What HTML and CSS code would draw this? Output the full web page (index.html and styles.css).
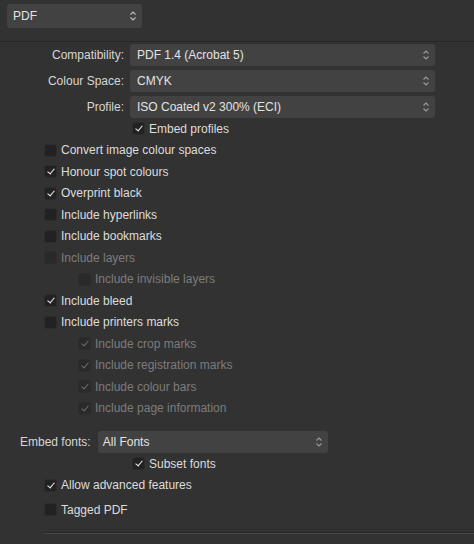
FILE: index.html
```html
<!DOCTYPE html>
<html lang="en">
<head>
    <meta charset="UTF-8">
    <title>PDF Export</title>
    <link rel="stylesheet" href="styles.css">
</head>
<body>
    <div class="topbar">
        <div class="popup popup-preset">
            <span>PDF</span>
            <svg class="chev" width="8" height="12" viewBox="0 0 8 12"><path d="M1.5 4.5 4 2l2.5 2.5M1.5 7.5 4 10l2.5-2.5" fill="none" stroke="#bdbdbd" stroke-width="1.1"/></svg>
        </div>
    </div>

    <div class="settings">
        <div class="field-grid">
            <label class="field-label">Compatibility:</label>
            <div class="popup">
                <span>PDF 1.4 (Acrobat 5)</span>
                <svg class="chev" width="8" height="12" viewBox="0 0 8 12"><path d="M1.5 4.5 4 2l2.5 2.5M1.5 7.5 4 10l2.5-2.5" fill="none" stroke="#9a9a9a" stroke-width="1.1"/></svg>
            </div>
            <label class="field-label">Colour Space:</label>
            <div class="popup">
                <span>CMYK</span>
                <svg class="chev" width="8" height="12" viewBox="0 0 8 12"><path d="M1.5 4.5 4 2l2.5 2.5M1.5 7.5 4 10l2.5-2.5" fill="none" stroke="#9a9a9a" stroke-width="1.1"/></svg>
            </div>
            <label class="field-label">Profile:</label>
            <div class="popup">
                <span>ISO Coated v2 300% (ECI)</span>
                <svg class="chev" width="8" height="12" viewBox="0 0 8 12"><path d="M1.5 4.5 4 2l2.5 2.5M1.5 7.5 4 10l2.5-2.5" fill="none" stroke="#9a9a9a" stroke-width="1.1"/></svg>
            </div>
        </div>

        <div class="check-row indent-field">
            <span class="box checked"></span>
            <span>Embed profiles</span>
        </div>

        <div class="check-list">
            <div class="check-row"><span class="box"></span><span>Convert image colour spaces</span></div>
            <div class="check-row"><span class="box checked"></span><span>Honour spot colours</span></div>
            <div class="check-row"><span class="box checked"></span><span>Overprint black</span></div>
            <div class="check-row"><span class="box"></span><span>Include hyperlinks</span></div>
            <div class="check-row"><span class="box"></span><span>Include bookmarks</span></div>
            <div class="check-row disabled"><span class="box"></span><span>Include layers</span></div>
            <div class="check-row disabled sub"><span class="box"></span><span>Include invisible layers</span></div>
            <div class="check-row"><span class="box checked"></span><span>Include bleed</span></div>
            <div class="check-row"><span class="box"></span><span>Include printers marks</span></div>
            <div class="check-row disabled sub"><span class="box checked"></span><span>Include crop marks</span></div>
            <div class="check-row disabled sub"><span class="box checked"></span><span>Include registration marks</span></div>
            <div class="check-row disabled sub"><span class="box checked"></span><span>Include colour bars</span></div>
            <div class="check-row disabled sub"><span class="box checked"></span><span>Include page information</span></div>
        </div>

        <div class="fonts-row">
            <label class="field-label">Embed fonts:</label>
            <div class="popup popup-fonts">
                <span>All Fonts</span>
                <svg class="chev" width="8" height="12" viewBox="0 0 8 12"><path d="M1.5 4.5 4 2l2.5 2.5M1.5 7.5 4 10l2.5-2.5" fill="none" stroke="#9a9a9a" stroke-width="1.1"/></svg>
            </div>
        </div>

        <div class="check-row indent-field"><span class="box checked"></span><span>Subset fonts</span></div>
        <div class="check-row"><span class="box checked"></span><span>Allow advanced features</span></div>
        <div class="check-row tagged"><span class="box"></span><span>Tagged PDF</span></div>

        <div class="divider"></div>
    </div>
</body>
</html>
```

FILE: styles.css
```css
body {
    margin: 0;
    background-color: #323232;
    font-family: "Liberation Sans", Arial, sans-serif;
    font-size: 12px;
    color: #dcdcdc;
    overflow: hidden;
}
.topbar {
    height: 42px;
    box-sizing: border-box;
    padding: 4px 0 0 7px;
    border-bottom: 1px solid #262626;
}
.popup {
    display: flex;
    align-items: center;
    justify-content: space-between;
    height: 22px;
    box-sizing: border-box;
    padding: 0 5px 0 7px;
    background-color: #424242;
    border-radius: 3px;
    color: #e2e2e2;
}
.popup-preset {
    width: 135px;
    height: 24px;
    padding-left: 6px;
}
.chev {
    flex: none;
}
.settings {
    padding-top: 2px;
}
.field-grid {
    display: grid;
    grid-template-columns: 124px 305px;
    column-gap: 6px;
    row-gap: 4px;
    align-items: center;
}
.field-label {
    text-align: right;
    color: #d6d6d6;
}
.check-row {
    display: flex;
    align-items: center;
    gap: 4px;
    height: 21.5px;
    padding-left: 44px;
}
.indent-field {
    padding-left: 132px;
}
.check-row.sub {
    padding-left: 78px;
}
.check-row.disabled {
    color: #7c7c7c;
}
.box {
    width: 13px;
    height: 13px;
    box-sizing: border-box;
    border-radius: 3px;
    background-color: #222222;
    border: 1px solid #2c2c2c;
    position: relative;
    flex: none;
}
.box.checked::after {
    content: "";
    position: absolute;
    left: 4px;
    top: 1px;
    width: 3px;
    height: 6px;
    border: solid #f0f0f0;
    border-width: 0 1.6px 1.6px 0;
    transform: rotate(40deg);
}
.disabled .box.checked::after {
    border-color: #6e6e6e;
}
.disabled .box {
    background-color: #2a2a2a;
}
.fonts-row {
    display: flex;
    align-items: center;
    gap: 7px;
    margin-top: 12px;
    padding-left: 20px;
}
.popup-fonts {
    width: 230px;
    padding-left: 5px;
}
.tagged {
    margin-top: 3px;
}
.divider {
    margin: 11px 0 0 45px;
    height: 1px;
    background-color: #4a4a4a;
    border-top: 1px solid #262626;
}
```
